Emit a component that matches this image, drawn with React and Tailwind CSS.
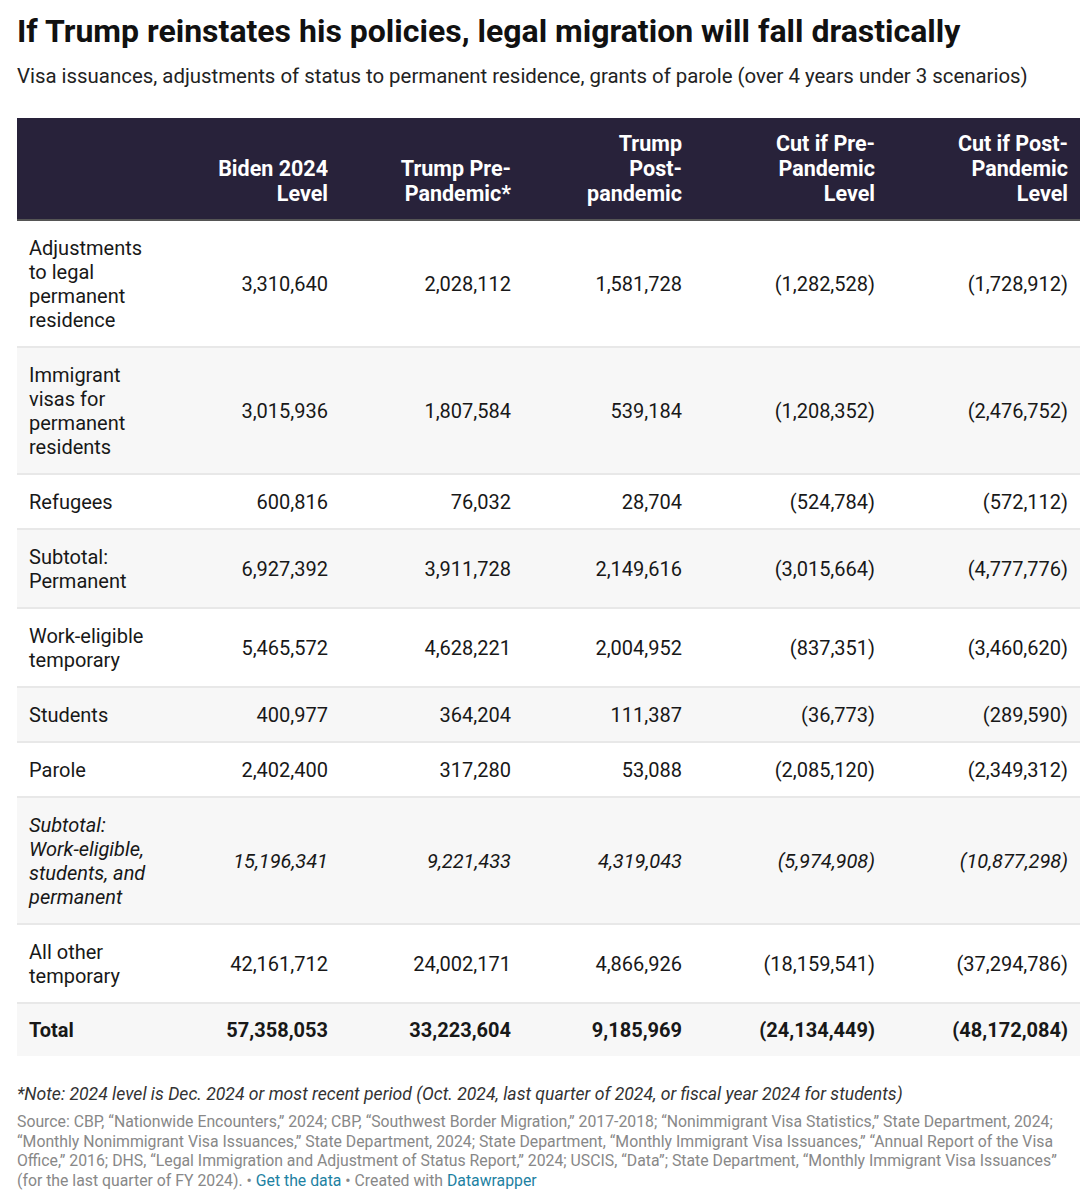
import React from "react";

const rows = [
  { label: "Adjustments to legal permanent residence", vals: ["3,310,640", "2,028,112", "1,581,728", "(1,282,528)", "(1,728,912)"] },
  { label: "Immigrant visas for permanent residents", vals: ["3,015,936", "1,807,584", "539,184", "(1,208,352)", "(2,476,752)"] },
  { label: "Refugees", vals: ["600,816", "76,032", "28,704", "(524,784)", "(572,112)"] },
  { label: "Subtotal: Permanent", vals: ["6,927,392", "3,911,728", "2,149,616", "(3,015,664)", "(4,777,776)"] },
  { label: "Work-eligible temporary", vals: ["5,465,572", "4,628,221", "2,004,952", "(837,351)", "(3,460,620)"] },
  { label: "Students", vals: ["400,977", "364,204", "111,387", "(36,773)", "(289,590)"] },
  { label: "Parole", vals: ["2,402,400", "317,280", "53,088", "(2,085,120)", "(2,349,312)"] },
  { label: "Subtotal: Work-eligible, students, and permanent", vals: ["15,196,341", "9,221,433", "4,319,043", "(5,974,908)", "(10,877,298)"], italic: true },
  { label: "All other temporary", vals: ["42,161,712", "24,002,171", "4,866,926", "(18,159,541)", "(37,294,786)"] },
];

const heads = [
  ["Biden 2024", "Level"],
  ["Trump Pre-", "Pandemic*"],
  ["Trump", "Post-", "pandemic"],
  ["Cut if Pre-", "Pandemic", "Level"],
  ["Cut if Post-", "Pandemic", "Level"],
];

export default function App() {
  return (
    <div className="bg-white px-[17px] pt-[12px] pb-4 text-[#181818]" style={{ fontFamily: "Roboto, 'Liberation Sans', sans-serif" }}>
      <h1 className="text-[32px] leading-[38px] font-bold text-[#111]">
        If Trump reinstates his policies, legal migration will fall drastically
      </h1>
      <p className="mt-[14px] text-[20.4px] leading-[24px] text-[#222]">
        Visa issuances, adjustments of status to permanent residence, grants of parole (over 4 years under 3 scenarios)
      </p>

      <table className="mt-[30px] w-[1063px] table-fixed border-collapse text-[20px] leading-[24px]">
        <colgroup>
          <col className="w-[150px]" />
          <col className="w-[173px]" />
          <col className="w-[183px]" />
          <col className="w-[171px]" />
          <col className="w-[193px]" />
          <col className="w-[193px]" />
        </colgroup>
        <thead>
          <tr className="bg-[#28223a] text-white border-b-2 border-[#555]">
            <th className="h-[102px]"></th>
            {heads.map((h, i) => (
              <th key={i} className="px-3 pt-[12px] pb-[13px] align-bottom text-right font-bold text-[21.5px] leading-[25px]">
                {h.map((l, j) => (
                  <div key={j}>{l}</div>
                ))}
              </th>
            ))}
          </tr>
        </thead>
        <tbody>
          {rows.map((r, i) => (
            <tr
              key={i}
              className={
                (i % 2 === 1 ? "bg-[#f7f7f7] " : "bg-white ") +
                "border-b-2 border-[#e8e8e8] " +
                (r.italic ? "italic" : "")
              }
            >
              <td className="px-3 pt-[15px] pb-[14px] text-left align-middle">{r.label}</td>
              {r.vals.map((v, j) => (
                <td key={j} className="px-3 pt-[15px] pb-[14px] text-right align-middle">
                  {v}
                </td>
              ))}
            </tr>
          ))}
          <tr className="bg-[#f7f7f7] border-t-2 border-[#222] font-bold">
            <td className="px-3 py-[14px] text-left">Total</td>
            {["57,358,053", "33,223,604", "9,185,969", "(24,134,449)", "(48,172,084)"].map((v, j) => (
              <td key={j} className="px-3 py-[14px] text-right">
                {v}
              </td>
            ))}
          </tr>
        </tbody>
      </table>

      <p className="mt-[27px] text-[17.6px] leading-[22px] italic text-[#333]">
        *Note: 2024 level is Dec. 2024 or most recent period (Oct. 2024, last quarter of 2024, or fiscal year 2024 for students)
      </p>
      <p className="mt-[7px] text-[15.8px] leading-[19.5px] text-[#888]">
        Source: CBP, “Nationwide Encounters,” 2024; CBP, “Southwest Border Migration,” 2017-2018; “Nonimmigrant Visa Statistics,” State Department, 2024; “Monthly Nonimmigrant Visa Issuances,” State Department, 2024; State Department, “Monthly Immigrant Visa Issuances,” “Annual Report of the Visa Office,” 2016; DHS, “Legal Immigration and Adjustment of Status Report,” 2024; USCIS, “Data”; State Department, “Monthly Immigrant Visa Issuances” (for the last quarter of FY 2024). • <span className="text-[#1d81a2]">Get the data</span> • Created with <span className="text-[#1d81a2]">Datawrapper</span>
      </p>
    </div>
  );
}
